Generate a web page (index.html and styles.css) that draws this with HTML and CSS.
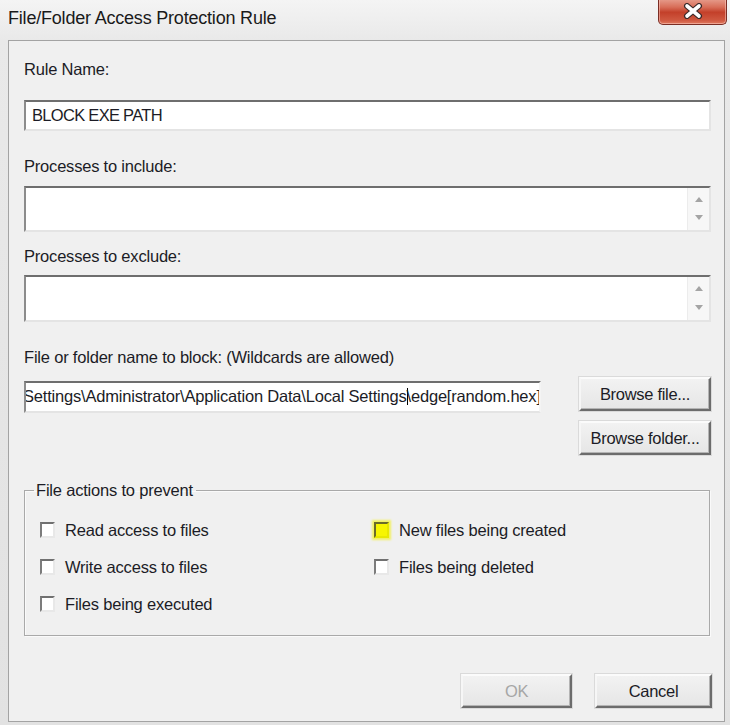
FILE: index.html
```html
<!DOCTYPE html>
<html lang="en">
<head>
    <meta charset="UTF-8">
    <title>File/Folder Access Protection Rule</title>
    <link rel="stylesheet" href="styles.css">
</head>
<body>
    <div class="window">
        <div class="titlebar">
            <span class="title">File/Folder Access Protection Rule</span>
            <div class="close-btn">
                <svg width="24" height="16" viewBox="0 0 24 16">
                    <path d="M6 3 L18 13 M18 3 L6 13" stroke="#3a2a2a" stroke-width="6" stroke-linecap="round"/>
                    <path d="M6 3 L18 13 M18 3 L6 13" stroke="#ffffff" stroke-width="3.6" stroke-linecap="round"/>
                </svg>
            </div>
        </div>

        <div class="panel">
            <div class="label first">Rule Name:</div>
            <div class="field">BLOCK EXE PATH</div>

            <div class="label">Processes to include:</div>
            <div class="field multi">
                <div class="scroller">
                    <span class="arrow up"></span>
                    <span class="arrow down"></span>
                </div>
            </div>

            <div class="label second">Processes to exclude:</div>
            <div class="field multi tall">
                <div class="scroller">
                    <span class="arrow up"></span>
                    <span class="arrow down"></span>
                </div>
            </div>

            <div class="label">File or folder name to block: (Wildcards are allowed)</div>
            <div class="path-row">
                <div class="field path"><span class="path-text">Settings\Administrator\Application Data\Local Settings<span class="caret"></span>\edge[random.hex]</span></div>
                <div class="browse">
                    <button class="btn">Browse file...</button>
                    <button class="btn">Browse folder...</button>
                </div>
            </div>

            <fieldset class="group">
                <legend>File actions to prevent</legend>
                <div class="checks">
                    <label class="check"><span class="box"></span>Read access to files</label>
                    <label class="check"><span class="box marked"></span>New files being created</label>
                    <label class="check"><span class="box"></span>Write access to files</label>
                    <label class="check"><span class="box"></span>Files being deleted</label>
                    <label class="check"><span class="box"></span>Files being executed</label>
                </div>
            </fieldset>

            <div class="actions">
                <button class="btn ok" disabled>OK</button>
                <button class="btn cancel">Cancel</button>
            </div>
        </div>
    </div>
</body>
</html>
```

FILE: styles.css
```css
body {
    margin: 0;
    font-family: "Liberation Sans", Arial, sans-serif;
    font-size: 16.5px;
    color: #1c1c26;
    background: #e6e6e6;
}
.window {
    width: 730px;
    height: 725px;
    box-sizing: border-box;
    padding: 0 5px 3px 8px;
    background: linear-gradient(to bottom, #f4f4f4 0, #e9e9e9 40px, #e2e2e2 100%);
    position: relative;
    overflow: hidden;
}
.titlebar {
    height: 40px;
    display: flex;
    align-items: center;
}
.title {
    font-size: 18px;
    color: #1a1a1a;
    margin-top: -4px;
    letter-spacing: -0.2px;
}
.close-btn {
    position: absolute;
    top: -2px;
    right: 3px;
    width: 67px;
    height: 26px;
    border: 1px solid #7a2d24;
    border-top: none;
    border-radius: 0 0 5px 5px;
    background: linear-gradient(to bottom, #e8a393 0, #d86e59 35%, #c3402a 55%, #cf5840 85%, #e07a60 100%);
    display: flex;
    align-items: center;
    justify-content: center;
    box-shadow: inset 0 0 0 1px rgba(255,210,200,0.5);
}
.panel {
    background-color: #f0f0f0;
    border: 1px solid #a3a3a3;
    height: 682px;
    box-sizing: border-box;
    padding: 0 13px 0 15px;
}
.label {
    height: 20px;
    line-height: 20px;
    margin-top: 25px;
    letter-spacing: -0.2px;
}
.label.first {
    margin-top: 18px;
}
.label.second {
    margin-top: 14px;
}
.field {
    height: 31px;
    box-sizing: border-box;
    margin-top: 21px;
    background: #fff;
    border: 2px solid;
    border-color: #6e6e6e #e4e4e4 #e4e4e4 #8c8c8c;
    padding-left: 6px;
    line-height: 27px;
    letter-spacing: -0.7px;
    white-space: nowrap;
    overflow: hidden;
}
.field.multi {
    height: 46px;
    margin-top: 10px;
    position: relative;
}
.field.tall {
    height: 47px;
    margin-top: 9px;
}
.scroller {
    position: absolute;
    top: 0;
    right: 0;
    bottom: 0;
    width: 21px;
    background: #f7f7f7;
    border-left: 1px solid #ececec;
}
.arrow {
    position: absolute;
    left: 7px;
    width: 0;
    height: 0;
    border-left: 4px solid transparent;
    border-right: 4px solid transparent;
}
.arrow.up {
    top: 9px;
    border-bottom: 5px solid #a4a4a4;
}
.arrow.down {
    bottom: 10px;
    border-top: 5px solid #a4a4a4;
}
.path-row {
    display: flex;
    margin-top: 10px;
}
.field.path {
    width: 518px;
    height: 32px;
    margin-top: 4px;
    padding-left: 0;
    border-right-color: #f4f4f4;
    font-size: 16.5px;
    letter-spacing: -0.2px;
}
.path-text {
    display: inline-block;
    margin-left: -3px;
}
.caret {
    display: inline-block;
    width: 1px;
    height: 17px;
    background: #000;
    vertical-align: -3px;
    margin-right: -1px;
}
.browse {
    margin-left: 38px;
    display: flex;
    flex-direction: column;
    gap: 10px;
}
.btn {
    font-family: "Liberation Sans", Arial, sans-serif;
    font-size: 16.5px;
    letter-spacing: -0.3px;
    color: #1c1c26;
    background: linear-gradient(to bottom, #f2f2f2, #e6e6e6);
    border: 2px solid;
    border-color: #fbfbfb #6c6c6c #6c6c6c #f6f6f6;
    box-shadow: inset -1px -1px 0 #b4b4b4, 0 0 0 1px #dadada;
    width: 132px;
    height: 34px;
    padding: 0;
}
.group {
    margin: 25px 1px 0 0;
    padding: 0 0 21px 15px;
    border: 1px solid #a9a9a9;
    box-shadow: inset 1px 1px 0 #fafafa, 1px 1px 0 #fafafa;
}
.group legend {
    height: 20px;
    line-height: 20px;
    padding: 0 3px 0 2px;
    margin-left: -6px;
    letter-spacing: -0.2px;
}
.checks {
    display: grid;
    grid-template-columns: 334px 1fr;
    row-gap: 17px;
    padding-top: 20px;
}
.check {
    display: flex;
    align-items: center;
    height: 20px;
    letter-spacing: -0.2px;
}
.box {
    width: 15px;
    height: 16px;
    box-sizing: border-box;
    background: #fff;
    border: 2px solid;
    border-color: #707070 #e8e8e8 #e8e8e8 #7c7c7c;
    margin-right: 10px;
}
.box.marked {
    background: #f7f500;
    border-color: #6a6a2a #e8e800 #e8e800 #6a6a2a;
    box-shadow: 0 0 2px 2px #f2f060;
}
.actions {
    display: flex;
    justify-content: flex-end;
    gap: 23px;
    margin-top: 38px;
    margin-right: -1px;
}
.btn.ok {
    width: 111px;
    color: #a6a6a6;
}
.btn.cancel {
    width: 117px;
}
```
